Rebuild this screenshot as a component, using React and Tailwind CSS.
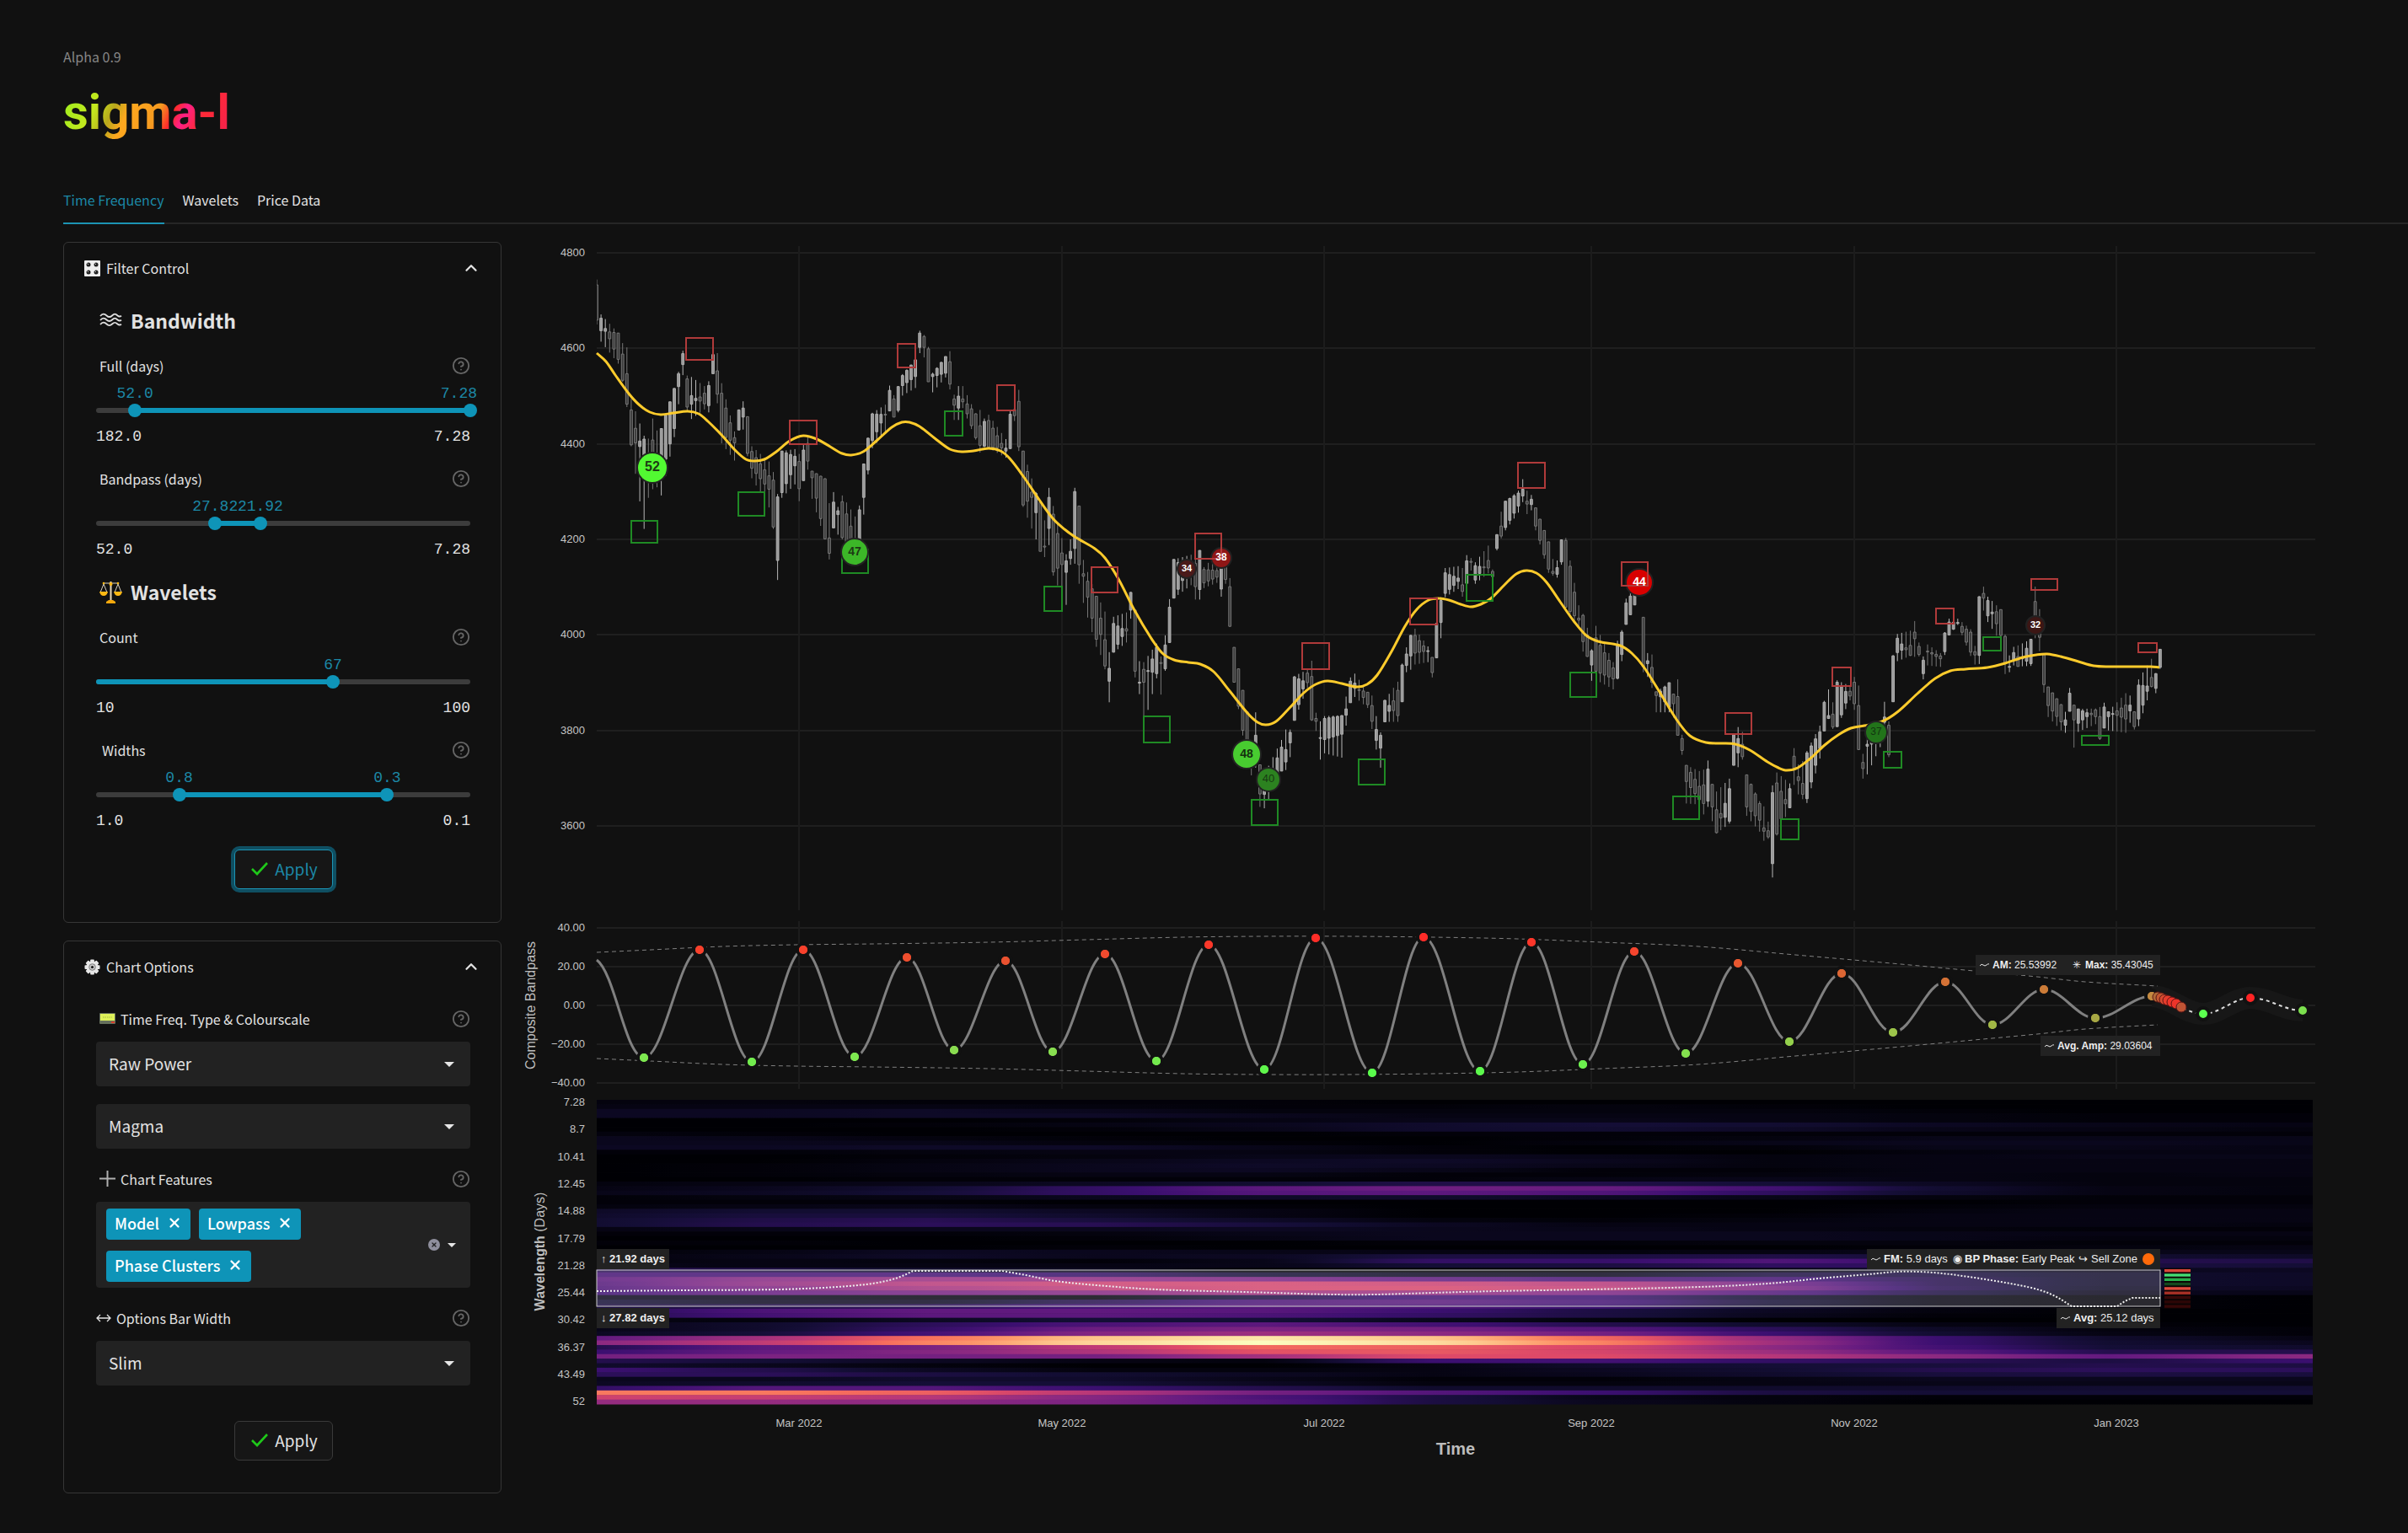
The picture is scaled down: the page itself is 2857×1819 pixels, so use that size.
import { useState } from 'react'
import { ChevronUp, CircleQuestionMark, X } from 'lucide-react'

/* ---------- price data: MMDD open high low close ---------- */
const PRICES = `
0113 4733 4744 4650 4659|0114 4637 4671 4614 4663|0118 4632 4632 4568 4577|0119 4588 4611 4530 4533|0120 4547 4602 4477 4483
0121 4471 4494 4395 4398|0124 4356 4417 4222 4410|0125 4367 4411 4287 4356|0126 4408 4453 4305 4350|0127 4380 4428 4309 4327
0128 4336 4432 4292 4432|0131 4432 4517 4414 4516|0201 4520 4551 4483 4547|0202 4566 4595 4544 4589|0203 4536 4543 4470 4477
0204 4483 4540 4452 4501|0207 4506 4521 4472 4484|0208 4480 4531 4466 4522|0209 4547 4590 4547 4587|0210 4553 4590 4485 4504
0211 4506 4527 4401 4419|0214 4413 4426 4365 4402|0215 4429 4472 4429 4471|0216 4456 4489 4430 4475|0217 4457 4457 4374 4380
0218 4384 4395 4328 4349|0222 4333 4363 4267 4305|0223 4324 4341 4222 4226|0224 4156 4295 4115 4289|0225 4298 4385 4287 4385
0228 4354 4389 4315 4374|0301 4363 4379 4280 4306|0302 4323 4401 4323 4387|0303 4401 4417 4346 4364|0304 4343 4343 4285 4329
0307 4327 4328 4200 4201|0308 4203 4276 4158 4171|0309 4224 4299 4224 4278|0310 4252 4268 4210 4260|0311 4279 4292 4200 4204
0314 4202 4248 4162 4173|0315 4189 4271 4188 4262|0316 4288 4358 4252 4358|0317 4345 4413 4336 4412|0318 4407 4465 4391 4463
0321 4462 4482 4424 4461|0322 4469 4522 4469 4512|0323 4494 4502 4456 4456|0324 4470 4521 4466 4520|0325 4522 4546 4501 4543
0328 4541 4576 4517 4576|0329 4602 4637 4590 4632|0330 4625 4628 4581 4602|0331 4599 4603 4530 4530|0401 4541 4549 4508 4546
0404 4548 4583 4539 4583|0405 4572 4594 4514 4525|0406 4494 4503 4450 4481|0407 4475 4521 4450 4500|0408 4494 4521 4475 4488
0411 4463 4464 4409 4413|0412 4438 4471 4382 4397|0413 4395 4453 4393 4447|0414 4449 4461 4391 4393|0418 4385 4410 4371 4391
0419 4390 4471 4390 4462|0420 4472 4489 4448 4459|0421 4489 4513 4385 4394|0422 4385 4385 4268 4272|0425 4256 4299 4200 4296
0426 4278 4279 4175 4175|0427 4186 4240 4163 4184|0428 4223 4308 4188 4288|0429 4253 4270 4124 4132|0502 4131 4169 4063 4155
0503 4160 4200 4147 4175|0504 4181 4308 4149 4300|0505 4270 4270 4107 4147|0506 4128 4157 4067 4123|0509 4081 4081 3975 3991
0510 4035 4068 3958 4001|0511 3990 4049 3928 3935|0512 3903 3964 3859 3930|0513 3964 4038 3963 4024|0516 4013 4047 3984 4008
0517 4052 4090 4034 4089|0518 4052 4052 3911 3924|0519 3899 3945 3876 3901|0520 3928 3943 3810 3901|0523 3919 3982 3909 3974
0524 3942 3955 3875 3941|0525 3929 3999 3925 3979|0526 3984 4075 3984 4058|0527 4077 4158 4077 4158|0531 4151 4168 4104 4132
0601 4150 4166 4074 4101|0602 4095 4177 4074 4177|0603 4137 4142 4098 4109|0606 4135 4169 4109 4121|0607 4096 4164 4080 4161
0608 4147 4160 4107 4116|0609 4101 4119 4017 4018|0610 3974 3974 3900 3901|0613 3839 3839 3734 3750|0614 3764 3778 3706 3735
0615 3764 3838 3722 3790|0616 3728 3728 3640 3667|0617 3666 3708 3637 3675|0621 3715 3780 3715 3765|0622 3734 3802 3717 3760
0623 3774 3802 3744 3796|0624 3821 3914 3821 3912|0627 3920 3927 3889 3900|0628 3913 3946 3820 3822|0629 3825 3837 3799 3819
0630 3785 3819 3739 3785|0701 3781 3830 3752 3825|0705 3792 3832 3743 3831|0706 3832 3871 3810 3845|0707 3858 3911 3858 3903
0708 3888 3919 3870 3899|0711 3880 3880 3847 3854|0712 3852 3873 3803 3819|0713 3779 3830 3760 3802|0714 3763 3796 3722 3790
0715 3818 3864 3818 3863|0718 3884 3902 3818 3831|0719 3860 3940 3860 3937|0720 3936 3974 3922 3960|0721 3956 4000 3927 3999
0722 3999 4013 3938 3962|0725 3966 3976 3943 3967|0726 3953 3953 3911 3921|0727 3952 4040 3952 4024|0728 4026 4079 3993 4072
0729 4087 4140 4079 4130|0801 4112 4144 4096 4119|0802 4105 4140 4080 4091|0803 4108 4167 4108 4155|0804 4154 4161 4135 4152
0805 4115 4152 4107 4145|0808 4156 4187 4129 4140|0809 4133 4137 4112 4122|0810 4181 4211 4177 4210|0811 4228 4258 4202 4207
0812 4225 4280 4219 4280|0815 4270 4302 4256 4297|0816 4291 4326 4278 4305|0817 4280 4302 4253 4274|0818 4273 4293 4261 4284
0819 4266 4267 4219 4228|0822 4195 4195 4130 4138|0823 4133 4159 4124 4129|0824 4127 4156 4120 4141|0825 4153 4200 4147 4199
0826 4198 4203 4057 4058|0829 4035 4062 4017 4031|0830 4041 4044 3965 3986|0831 4000 4015 3954 3955|0901 3937 3970 3904 3967
0902 3994 4019 3906 3924|0906 3931 3943 3886 3908|0907 3909 3988 3907 3980|0908 3959 4010 3945 4006|0909 4022 4076 4022 4067
0912 4083 4119 4083 4110|0913 4037 4037 3922 3933|0914 3940 3962 3912 3946|0915 3932 3959 3889 3901|0916 3881 3881 3838 3873
0919 3849 3900 3838 3900|0920 3876 3876 3827 3856|0921 3871 3907 3790 3790|0922 3783 3791 3749 3758|0923 3727 3727 3647 3693
0926 3683 3715 3645 3655|0927 3686 3718 3624 3647|0928 3652 3737 3640 3719|0929 3687 3687 3610 3640|0930 3634 3672 3584 3586
1003 3610 3699 3605 3678|1004 3727 3792 3727 3791|1005 3753 3807 3723 3783|1006 3771 3797 3739 3745|1007 3707 3707 3621 3640
1010 3647 3652 3588 3612|1011 3596 3641 3569 3589|1012 3590 3609 3573 3577|1013 3521 3685 3492 3670|1014 3690 3712 3580 3583
1017 3638 3689 3638 3678|1018 3746 3763 3686 3720|1019 3703 3729 3666 3695|1020 3689 3736 3656 3666|1021 3657 3757 3648 3753
1024 3762 3810 3741 3797|1025 3799 3862 3799 3859|1026 3825 3886 3824 3831|1027 3834 3859 3803 3807|1028 3808 3905 3808 3901
1031 3882 3893 3863 3872|1101 3901 3912 3843 3856|1102 3852 3894 3759 3760|1103 3733 3751 3699 3720|1104 3767 3796 3708 3771
1107 3780 3813 3765 3807|1108 3817 3860 3787 3828|1109 3811 3819 3744 3749|1110 3860 3958 3860 3956|1111 3963 4002 3945 3993
1114 3978 4009 3956 3957|1115 4006 4029 3954 3992|1116 3976 3984 3955 3959|1117 3919 3955 3907 3947|1118 3966 3980 3936 3965
1121 3956 3962 3933 3950|1122 3965 4006 3958 4004|1123 4000 4034 4000 4027|1125 4024 4034 4021 4026|1128 4006 4012 3956 3964
1129 3965 3977 3938 3958|1130 3957 4081 3939 4080|1201 4087 4101 4051 4077|1202 4040 4080 4027 4072|1205 4053 4053 3984 3999
1206 3997 4001 3918 3941|1207 3934 3957 3922 3934|1208 3947 3975 3936 3963|1209 3955 3978 3934 3934|1212 3940 3991 3935 3991
1213 4070 4101 3993 4019|1214 4015 4054 3966 3995|1215 3959 3959 3879 3896|1216 3891 3891 3828 3852|1219 3854 3855 3800 3818
1220 3811 3839 3795 3822|1221 3840 3889 3840 3878|1222 3853 3853 3764 3822|1223 3815 3845 3797 3845|1227 3843 3846 3813 3829
1228 3829 3849 3780 3783|1229 3805 3858 3805 3849|1230 3829 3840 3800 3839|1303 3853 3878 3795 3824|1304 3841 3873 3816 3853
1305 3839 3840 3802 3808|1306 3824 3907 3809 3895|1309 3911 3950 3890 3892|1310 3888 3920 3878 3919|1311 3932 3970 3929 3970`

const DAY = 5.11
const LEFT = 708
const priceY = (p) => 300 + (4800 - p) * 0.5667

// month 13 rolls over into the next January
const dayIndex = (mmdd) =>
  Math.round((Date.UTC(2022, Number(mmdd.slice(0, 2)) - 1, Number(mmdd.slice(2))) - Date.UTC(2022, 0, 13)) / 86400000)

function buildCandles() {
  const rows = PRICES.trim().split(/[|\n]/).map((r) => {
    const [d, ...v] = r.trim().split(' ')
    return { i: dayIndex(d), v: v.map(Number) }
  })
  const out = []
  rows.forEach((row, n) => {
    out.push(row)
    const next = rows[n + 1]
    if (!next) return
    // closed days are filled linearly
    for (let i = row.i + 1; i < next.i; i++) {
      const t = (i - row.i) / (next.i - row.i)
      out.push({ i, v: row.v.map((a, k) => a + (next.v[k] - a) * t) })
    }
  })
  const paths = { up: '', down: '', upWick: '', downWick: '' }
  out.forEach(({ i, v: [o, h, l, c] }) => {
    const x = LEFT + i * DAY
    const dir = c >= o ? 'up' : 'down'
    const top = priceY(Math.max(o, c))
    const bottom = Math.max(priceY(Math.min(o, c)), top + 1)
    paths[`${dir}Wick`] += `M${x.toFixed(1)} ${priceY(h).toFixed(1)}V${priceY(l).toFixed(1)}`
    paths[dir] += `M${(x - 1.4).toFixed(1)} ${top.toFixed(1)}h2.8V${bottom.toFixed(1)}h-2.8z`
  })
  return paths
}
const CANDLES = buildCandles()

// smooth line through a flat list x0,y0,x1,y1...
function smooth(flat) {
  const p = []
  for (let i = 0; i < flat.length; i += 2) p.push([flat[i], flat[i + 1]])
  let d = `M${p[0][0]} ${p[0][1]}`
  for (let i = 0; i < p.length - 1; i++) {
    const a = p[i - 1] || p[i]
    const b = p[i]
    const c = p[i + 1]
    const e = p[i + 2] || c
    const k = (c[0] - b[0]) / 3
    const m1 = a === b ? (c[1] - b[1]) / (c[0] - b[0]) : (c[1] - a[1]) / (c[0] - a[0])
    const m2 = e === c ? (c[1] - b[1]) / (c[0] - b[0]) : (e[1] - b[1]) / (e[0] - b[0])
    d += `C${b[0] + k} ${b[1] + m1 * k} ${c[0] - k} ${c[1] - m2 * k} ${c[0]} ${c[1]}`
  }
  return d
}

const LOWPASS = smooth([
  708, 419, 719, 429, 730, 445, 746, 467, 758, 480, 771, 489, 784, 492, 799, 490, 816, 488, 829, 491, 840, 500, 856, 516,
  872, 534, 885, 545, 895, 547, 907, 545, 921, 536, 937, 523, 953, 517, 969, 521, 985, 530, 999, 538, 1010, 540, 1024, 536,
  1040, 523, 1058, 507, 1070, 501, 1079, 501, 1091, 506, 1109, 520, 1127, 533, 1141, 536, 1155, 535, 1173, 532, 1187, 535,
  1198, 544, 1214, 565, 1233, 593, 1249, 615, 1263, 628, 1277, 638, 1299, 651, 1311, 662, 1327, 687, 1346, 724, 1365, 756,
  1379, 775, 1393, 783, 1410, 786, 1424, 788, 1440, 797, 1459, 820, 1480, 846, 1492, 857, 1502, 860, 1514, 856, 1530, 840,
  1547, 822, 1561, 812, 1575, 808, 1592, 811, 1610, 815, 1622, 812, 1634, 801, 1651, 773, 1667, 743, 1681, 723, 1695, 712,
  1707, 710, 1719, 712, 1733, 717, 1745, 720, 1757, 717, 1769, 710, 1785, 694, 1799, 681, 1811, 677, 1823, 680, 1835, 691,
  1851, 714, 1868, 738, 1882, 754, 1896, 761, 1922, 766, 1936, 775, 1950, 791, 1969, 821, 1990, 855, 2005, 873, 2024, 881,
  2042, 882, 2059, 883, 2076, 890, 2097, 904, 2110, 911, 2120, 914, 2133, 911, 2149, 899, 2165, 884, 2181, 872, 2196, 864,
  2212, 861, 2233, 856, 2251, 845, 2275, 823, 2296, 805, 2314, 796, 2332, 794, 2358, 792, 2379, 787, 2400, 780, 2416, 777,
  2429, 776, 2445, 779, 2466, 785, 2484, 790, 2502, 791, 2526, 791, 2552, 791, 2562, 792,
])

const PEAK_BOXES = [
  [814, 401, 32, 26], [937, 499, 32, 28], [1065, 408, 21, 28], [1183, 457, 21, 30], [1295, 673, 31, 30], [1418, 633, 31, 30],
  [1545, 763, 32, 31], [1673, 710, 32, 31], [1801, 549, 32, 30], [1924, 667, 31, 28], [2047, 846, 31, 25], [2174, 792, 22, 22],
  [2297, 722, 21, 18], [2410, 687, 31, 13], [2537, 763, 22, 11],
]
const TROUGH_BOXES = [
  [749, 618, 31, 26], [876, 584, 31, 28], [999, 652, 31, 28], [1121, 488, 21, 29], [1239, 696, 21, 29], [1357, 850, 31, 31],
  [1485, 949, 31, 30], [1612, 901, 31, 30], [1740, 682, 31, 31], [1863, 798, 31, 29], [1985, 945, 31, 27], [2113, 972, 21, 24],
  [2235, 892, 21, 19], [2353, 756, 21, 16], [2470, 873, 32, 11],
]

const PEAK_CLUSTERS = [
  { x: 1408, y: 675, r: 10, fill: '#4a1a1a', text: 34, size: 11, ink: '#fff', bold: true },
  { x: 1449, y: 662, r: 11, fill: '#8f1616', text: 38, size: 12, ink: '#fff', bold: true },
  { x: 1945, y: 691, r: 15, fill: '#d90000', text: 44, size: 14, ink: '#fff', bold: true },
  { x: 2415, y: 742, r: 10, fill: '#3c1614', text: 32, size: 11, ink: '#fff', bold: true },
]
const TROUGH_CLUSTERS = [
  { x: 774, y: 555, r: 17, fill: '#52f932', text: 52, size: 16, ink: '#1c3a14', bold: true },
  { x: 1014, y: 655, r: 15, fill: '#3cb728', text: 47, size: 14, ink: '#1c3a14', bold: true },
  { x: 1479, y: 895, r: 16, fill: '#48cc30', text: 48, size: 14, ink: '#14300e', bold: true },
  { x: 1505, y: 925, r: 13, fill: '#2c8220', text: 40, size: 13, ink: '#173a12', bold: false },
  { x: 2226, y: 869, r: 12, fill: '#22741a', text: 37, size: 12, ink: '#123610', bold: false },
]

/* ---------- composite bandpass ---------- */
const EXTREMES = [
  [764, 1255, '#7ee850'], [830, 1127, '#f8412c'], [892, 1260, '#72ec4e'], [953, 1127, '#f8412c'], [1014, 1254, '#7ee850'],
  [1076, 1136, '#ee4e2e'], [1132, 1246, '#8adc50'], [1193, 1140, '#ea5230'], [1249, 1248, '#88de50'], [1311, 1132, '#f04a2e'],
  [1372, 1259, '#74ea4e'], [1434, 1121, '#fb382a'], [1500, 1269, '#60f64c'], [1561, 1113, '#ff2e28'], [1628, 1273, '#5afb4c'],
  [1689, 1112, '#ff2c28'], [1756, 1271, '#5cf84c'], [1817, 1118, '#fc362a'], [1878, 1263, '#6cf04e'], [1939, 1129, '#f4452e'],
  [2000, 1250, '#84e04e'], [2062, 1143, '#e85830'], [2123, 1236, '#94d04c'], [2185, 1155, '#dc6634'], [2246, 1225, '#9cc44a'],
  [2308, 1165, '#d47236'], [2364, 1216, '#a2b846'], [2425, 1174, '#cc7c38'], [2486, 1208, '#a8a844'], [2553, 1182, '#c48a40'],
]
const FORECAST = [[2614, 1203, '#5cff50'], [2670, 1184, '#ff2424'], [2732, 1199, '#7ce04e']]
const NOW = [
  [2560, 1183, '#b06a38'], [2564, 1184, '#c45832'], [2568, 1186, '#d84a30'], [2572, 1187, '#e63c2c'], [2577, 1189, '#ee342a'],
  [2582, 1191, '#ee342a'], [2588, 1195, '#c05434'],
]
const wave = (pts) =>
  pts.slice(1).reduce((d, [x, y], i) => {
    const [px, py] = pts[i]
    const k = (x - px) * 0.3642
    return `${d}C${px + k} ${py} ${x - k} ${y} ${x} ${y}`
  }, `M${pts[0][0]} ${pts[0][1]}`)
const BANDPASS = `M708 1139C730 1155 742 1255 764 1255${wave(EXTREMES).replace('M764 1255', '')}`
const FORECAST_LINE = wave([[2553, 1182], ...FORECAST])

const ENVELOPE = [
  708, 1130, 772, 1127, 858, 1123, 944, 1121, 1036, 1120, 1174, 1118, 1289, 1115, 1404, 1112, 1500, 1111, 1600, 1111, 1700, 1112,
  1800, 1114, 1900, 1118, 2015, 1123, 2130, 1133, 2244, 1143, 2342, 1152, 2417, 1159, 2474, 1165, 2560, 1170,
]
const ENVELOPE_TOP = smooth(ENVELOPE)
const ENVELOPE_BOTTOM = smooth(ENVELOPE.map((v, i) => (i % 2 ? 2386 - v : v)))

/* ---------- wavelet power, one row per wavelet, 0-100 ---------- */
const STOPS_X = [708, 900, 1100, 1300, 1500, 1700, 1900, 2100, 2300, 2500, 2744]
const POWER = `
2 2 1 1 1 0 0 0 0 0 0|3 3 3 2 1 1 2 1 0 0 0|6 6 7 5 2 2 2 2 1 0 0|6 6 7 7 5 3 3 3 2 1 1
0 0 0 1 3 4 4 3 2 1 1|0 0 1 3 5 8 10 9 6 4 3|0 0 0 1 4 8 9 7 4 3 2|2 1 0 0 0 1 1 1 1 1 1
5 4 2 1 0 0 1 2 4 4 4|5 5 4 2 1 0 2 4 5 5 4|6 6 7 7 4 1 0 1 4 4 3|1 1 2 3 3 1 0 0 2 3 3
0 0 1 2 4 5 4 2 3 4 4|0 0 2 4 6 7 5 2 3 3 3|0 1 3 5 7 6 4 2 3 3 3|0 1 3 5 6 4 1 1 3 3 3
0 1 2 3 3 1 1 2 3 2 3|0 0 1 1 1 1 3 4 3 2 2|2 3 4 6 9 13 13 10 6 2 2|3 5 9 18 28 33 31 22 9 3 2
4 6 10 18 26 28 25 17 8 3 2|1 2 3 5 7 8 6 4 2 1 1|1 1 1 0 0 0 0 0 0 1 1|2 3 4 2 1 0 0 0 1 2 2
7 9 9 6 3 0 0 0 2 3 3|8 11 11 8 3 0 0 1 3 3 3|9 13 15 11 7 2 1 2 3 3 3|9 14 16 15 11 6 3 3 3 3 2
3 4 5 5 6 5 4 3 2 1 1|1 1 1 2 4 5 5 5 4 3 3|0 0 0 1 3 5 5 5 4 2 2|1 1 0 0 0 1 1 2 2 1 1
0 0 0 1 0 0 0 0 1 2 3|1 3 6 5 4 3 2 3 4 4 4|2 4 7 5 6 12 12 13 10 9 7|2 3 2 1 4 18 19 25 19 14 13
4 3 3 3 4 10 12 17 17 12 10|15 13 8 5 0 0 0 3 8 5 6|22 22 22 18 10 6 5 12 12 8 7|27 38 42 40 35 28 22 22 14 8 7
25 40 50 55 57 55 50 33 14 8 7|24 36 45 52 57 58 52 36 15 7 6|20 30 34 38 45 42 36 25 12 5 4|5 5 3 2 12 22 20 8 3 1 0
10 6 6 14 24 27 22 10 3 1 0|12 14 16 22 26 24 20 9 3 1 0|14 24 29 29 27 20 12 6 2 0 0|14 22 28 28 24 18 12 5 1 0 0
3 2 6 10 10 5 2 0 0 0 0|4 8 16 24 28 22 14 8 3 1 0|4 8 18 32 36 34 26 16 7 2 1|6 10 22 38 44 40 34 20 9 3 1
30 45 70 88 95 88 68 42 20 8 3|40 52 74 92 100 93 74 45 20 9 5|14 28 35 52 68 66 58 40 22 10 8|20 30 38 48 62 64 58 44 28 14 14
34 36 34 34 45 60 60 50 40 30 40|14 10 6 3 2 20 22 18 15 12 20|8 5 2 0 0 3 8 10 11 14 12|20 14 6 2 2 3 6 9 14 16 16
16 16 12 9 6 3 5 8 11 12 11|5 5 8 8 4 1 1 3 5 5 5|6 8 10 10 6 2 2 3 4 4 4|18 26 26 20 14 8 8 8 8 9 9
72 72 66 50 34 26 20 12 10 10 10|56 54 50 38 24 12 4 2 1 1 1|42 42 40 36 26 12 5 2 0 0 0`
  .trim().split(/[|\n]/).map((r) => r.trim().split(' ').map(Number))

const MAGMA = [
  [0, 0, 4], [20, 14, 54], [59, 15, 112], [100, 26, 128], [140, 41, 129], [183, 55, 121], [222, 73, 104], [247, 112, 92],
  [254, 159, 109], [254, 207, 146], [252, 253, 191],
]
function magma(v) {
  const t = Math.max(0, Math.min(99.99, v)) / 10
  const i = Math.floor(t)
  const c = MAGMA[i].map((a, k) => Math.round(a + (MAGMA[i + 1][k] - a) * (t - i)))
  return `rgb(${c.join(',')})`
}
function rowStops(row) {
  const stops = []
  for (let s = 0; s < STOPS_X.length - 1; s++) {
    for (let q = 0; q < 4; q++) {
      const t = q / 4
      const e = t * t * (3 - 2 * t) * 0.5 + t * 0.5
      const x = STOPS_X[s] + (STOPS_X[s + 1] - STOPS_X[s]) * t
      stops.push([(x - 708) / 2036, magma(row[s] + (row[s + 1] - row[s]) * e)])
    }
  }
  stops.push([1, magma(row[row.length - 1])])
  return stops
}
const ROW_H = 361 / POWER.length

const FREQ_LINE = `${smooth([
  708, 1532, 810, 1531, 923, 1530, 993, 1527, 1035, 1523, 1059, 1518, 1073, 1513, 1083, 1508,
])}L1189 1508${smooth([
  1189, 1508, 1217, 1513, 1252, 1520, 1301, 1525, 1372, 1530, 1477, 1533, 1582, 1536, 1631, 1536, 1700, 1534, 1774, 1532,
  1884, 1530, 2017, 1527, 2098, 1523, 2158, 1517, 2217, 1512, 2250, 1509, 2276, 1509, 2305, 1511, 2349, 1517, 2401, 1526,
  2427, 1533, 2442, 1540, 2458, 1550,
]).replace('M1189 1508', '')}L2512 1550L2521 1544L2530 1540L2563 1540`

const PHASE_BARS = ['#d8463a', '#44dc74', '#28b04c', '#15481e', '#e04a3c', '#a83026', '#360808', '#2c0606', '#360808']

const MONTHS = [[948, 'Mar 2022'], [1260, 'May 2022'], [1571, 'Jul 2022'], [1888, 'Sep 2022'], [2200, 'Nov 2022'], [2511, 'Jan 2023']]
const WAVELENGTHS = ['7.28', '8.7', '10.41', '12.45', '14.88', '17.79', '21.28', '25.44', '30.42', '36.37', '43.49', '52']

function Tag({ x, y, w, children, size = 13, wavy = false }) {
  return (
    <g>
      <rect x={x} y={y} width={w} height="24" fill="#222" />
      {wavy && (
        <path
          d={`M${x + 5} ${y + 13}q2 -3 4 -1t4 0t3 -1`}
          fill="none"
          stroke="#e6e6e6"
          strokeWidth="1"
        />
      )}
      <text x={wavy ? x + 20 : x + 5} y={y + 16} fontSize={size} fill="#eee">{children}</text>
    </g>
  )
}

function Clusters({ items }) {
  return items.map((c) => <circle key={c.text} cx={c.x} cy={c.y} r={c.r + 1} fill={c.fill} stroke="#222" strokeWidth="2" />)
}

function Chart() {
  return (
    <svg
      viewBox="611 287 2246 1486"
      className="block h-auto w-full font-['Liberation_Sans',Arial,sans-serif]"
      role="img"
      aria-label="Price, composite bandpass and time frequency chart"
    >
      <defs>
        {POWER.map((row, i) => (
          <linearGradient id={`row${i}`} key={i}>
            {rowStops(row).map(([o, c]) => <stop key={o} offset={o} stopColor={c} />)}
          </linearGradient>
        ))}
        <clipPath id="plot"><rect x="708" y="287" width="2040" height="800" /></clipPath>
      </defs>

      {/* grid */}
      <g stroke="#1f1f1f" strokeWidth="2">
        {[4800, 4600, 4400, 4200, 4000, 3800, 3600].map((p) => <path key={p} d={`M708 ${Math.round(priceY(p))}H2747`} />)}
        {[1101, 1147, 1193, 1239, 1285].map((y) => <path key={y} d={`M708 ${y}H2747`} />)}
        {MONTHS.map(([x]) => <path key={x} d={`M${x} 292V1080M${x} 1093V1292`} stroke="#1c1c1c" />)}
      </g>
      <g fontSize="13" fill="#c4c4c4" textAnchor="end">
        {[4800, 4600, 4400, 4200, 4000, 3800, 3600].map((p) => <text key={p} x="694" y={Math.round(priceY(p)) + 4}>{p}</text>)}
        {['40.00', '20.00', '0.00', '−20.00', '−40.00'].map((t, i) => <text key={t} x="694" y={1105 + i * 46}>{t}</text>)}
        {WAVELENGTHS.map((t, i) => <text key={t} x="694" y={Math.round(1312 + i * 32.3)}>{t}</text>)}
      </g>
      <g fontSize="13" fill="#c4c4c4" textAnchor="middle">
        {MONTHS.map(([x, t]) => <text key={t} x={x} y="1693">{t}</text>)}
      </g>
      <text x="1727" y="1726" fontSize="20" fontWeight="bold" fill="#bdbdbd" textAnchor="middle">Time</text>
      <text transform="translate(635 1193) rotate(-90)" fontSize="16" fill="#bdbdbd" textAnchor="middle">Composite Bandpass</text>
      <text transform="translate(646 1485) rotate(-90)" fontSize="16" fill="#bdbdbd" textAnchor="middle">
        <tspan fontWeight="bold">Wavelength</tspan> (Days)
      </text>

      {/* price */}
      <g clipPath="url(#plot)">
        <path d={CANDLES.downWick} stroke="#777" strokeWidth="1" />
        <path d={CANDLES.down} stroke="#777" strokeWidth="1" fill="#3a3a3a" />
        <path d={CANDLES.upWick} stroke="#b8b8b8" strokeWidth="1" />
        <path d={CANDLES.up} stroke="#b0b0b0" strokeWidth="1" fill="#9a9a9a" />
      </g>
      <path d={LOWPASS} fill="none" stroke="#fdcb2c" strokeWidth="3" />
      <Clusters items={PEAK_CLUSTERS} />
      <g fill="none" strokeWidth="2">
        {PEAK_BOXES.map(([x, y, w, h]) => <rect key={x} x={x} y={y} width={w} height={h} stroke="#b03a3a" />)}
        {TROUGH_BOXES.map(([x, y, w, h]) => <rect key={x} x={x} y={y} width={w} height={h} stroke="#1f8a24" />)}
      </g>
      <Clusters items={TROUGH_CLUSTERS} />
      <g textAnchor="middle">
        {[...PEAK_CLUSTERS, ...TROUGH_CLUSTERS].map((c) => (
          <text key={c.text} x={c.x} y={c.y + Math.round(c.size * 0.25)} fontSize={c.size} fill={c.ink} fontWeight={c.bold ? 'bold' : 'normal'}>
            {c.text}
          </text>
        ))}
      </g>

      {/* bandpass */}
      <path d={FORECAST_LINE} fill="none" stroke="#171717" strokeWidth="26" />
      <g fill="none" stroke="#808080" strokeWidth="1" strokeDasharray="5 4">
        <path d={ENVELOPE_TOP} />
        <path d={ENVELOPE_BOTTOM} />
      </g>
      <path d={FORECAST_LINE} fill="none" stroke="#ddd" strokeWidth="2" strokeDasharray="4 4" />
      <path d={BANDPASS} fill="none" stroke="#808080" strokeWidth="3" />
      {EXTREMES.map(([x, y, c]) => <circle key={x} cx={x} cy={y} r="7" fill={c} stroke="#111" strokeWidth="4" />)}
      {EXTREMES.map(([x, y, c]) => <circle key={x} cx={x} cy={y} r="5" fill={c} />)}
      {NOW.map(([x, y, c]) => <circle key={x} cx={x} cy={y} r="6" fill={c} stroke="#5a1414" strokeWidth="1" />)}
      {FORECAST.map(([x, y, c]) => <circle key={x} cx={x} cy={y} r="7" fill={c} stroke="#111" strokeWidth="4" />)}
      <Tag x={2344} y={1133} w={219} size={12} wavy>
        <tspan fontWeight="bold">AM:</tspan> 25.53992
        <tspan x="2459">✳</tspan>
        <tspan x="2474" fontWeight="bold">Max:</tspan> 35.43045
      </Tag>
      <Tag x={2421} y={1229} w={142} size={12} wavy><tspan fontWeight="bold">Avg. Amp:</tspan> 29.03604</Tag>

      {/* time frequency */}
      {POWER.map((_, i) => (
        <rect key={i} x="708" y={1305 + i * ROW_H} width="2036" height={ROW_H + 0.5} fill={`url(#row${i})`} />
      ))}
      <rect x="708" y="1507" width="1855" height="43" fill="#fff" fillOpacity="0.16" stroke="#ccc" strokeWidth="1" />
      <path d={FREQ_LINE} fill="none" stroke="#eee" strokeWidth="2" strokeDasharray="2 2" />
      <rect x="2568" y="1505" width="31" height="48" fill="#0c0404" />
      {PHASE_BARS.map((c, i) => <rect key={i} x="2568" y={1506 + i * 5.3} width="31" height="3.4" fill={c} />)}
      <Tag x={708} y={1482} w={86}><tspan fontWeight="bold">↑ 21.92 days</tspan></Tag>
      <Tag x={708} y={1552} w={86}><tspan fontWeight="bold">↓ 27.82 days</tspan></Tag>
      <Tag x={2215} y={1482} w={348} wavy>
        <tspan fontWeight="bold">FM:</tspan> 5.9 days
        <tspan x="2317">◉</tspan>
        <tspan x="2331" fontWeight="bold">BP Phase:</tspan> Early Peak
        <tspan x="2466">↪</tspan>
        <tspan x="2481">Sell Zone</tspan>
      </Tag>
      <circle cx="2549" cy="1494" r="7" fill="#ff6a0a" />
      <Tag x={2440} y={1552} w={123} wavy><tspan fontWeight="bold">Avg:</tspan> 25.12 days</Tag>
    </svg>
  )
}

/* ---------- icons ---------- */
function KnobsIcon() {
  return (
    <svg viewBox="0 0 19 19" className="h-[19px] w-[19px]" aria-hidden="true">
      <rect width="19" height="19" rx="1" fill="#eee" />
      {[[5, 5], [14, 5], [5, 14], [14, 14]].map(([x, y]) => (
        <g key={`${x}${y}`}>
          <circle cx={x} cy={y} r="2.5" fill="#222" />
          <path d={`M${x} ${y}l-1.5-1.5`} stroke="#ccc" strokeWidth="1" />
        </g>
      ))}
    </svg>
  )
}

function GearIcon() {
  return (
    <svg viewBox="0 0 20 20" className="h-[19px] w-[19px]" aria-hidden="true">
      {[0, 45, 90, 135].map((a) => <rect key={a} x="7.5" y="0.5" width="5" height="19" rx="1" fill="#e6e6e6" transform={`rotate(${a} 10 10)`} />)}
      <circle cx="10" cy="10" r="7.5" fill="#e6e6e6" />
      <circle cx="10" cy="10" r="4" fill="#c8c8c8" stroke="#777" strokeWidth="1" />
      <circle cx="10" cy="10" r="1.6" fill="#111" />
    </svg>
  )
}

function WavesIcon() {
  return (
    <svg viewBox="0 0 27 18" className="h-[18px] w-[27px]" fill="none" stroke="#ddd" strokeWidth="1.8" aria-hidden="true">
      {[4, 9, 14].map((y) => (
        <path key={y} d={`M1 ${y}c2.500-3 5-3 7.500-.5c2 2 4.500 2 6.500 0c2.500-2.500 4-2.500 6.500 0c1.500 1.300 3 1.300 4.500.3`} />
      ))}
    </svg>
  )
}

function ScalesIcon() {
  return (
    <svg viewBox="0 0 27 27" className="h-[27px] w-[27px]" aria-hidden="true">
      <path d="M4 3h19M5 4L1 14M5 4l4 10M22 4l-4 10M22 4l4 10" stroke="#d8d0c0" strokeWidth="1" fill="none" />
      <path d="M13.500 1v23" stroke="#ead9b8" strokeWidth="2" />
      <path d="M0 13h10q-1 5-5 5t-5-5zM17 13h10q-1 5-5 5t-5-5z" fill="#fdb813" />
      <path d="M11 23h5l3 2v2H8v-2z" fill="#f5a80c" />
      <circle cx="13.500" cy="4" r="2" fill="#fdb813" />
      <circle cx="5" cy="3" r="1.300" fill="#fdb813" />
      <circle cx="22" cy="3" r="1.300" fill="#fdb813" />
    </svg>
  )
}

function PagerIcon() {
  return (
    <svg viewBox="0 0 19 13" className="-mr-0.5 h-[13px] w-[19px]" aria-hidden="true">
      <rect width="19" height="13" rx="1" fill="#66705c" />
      <rect x="1" y="1" width="17" height="8" fill="#dff25a" />
      <path d="M4 5h11" stroke="#a8c03c" strokeDasharray="1.500 1" />
      <rect x="14" y="10" width="4" height="2" fill="#d8402c" />
    </svg>
  )
}

function CheckIcon() {
  return (
    <svg viewBox="0 0 20 16" className="h-4 w-5" fill="none" stroke="#1fc81a" strokeWidth="2.600" aria-hidden="true">
      <path d="M1 8l6 6L19 1" />
    </svg>
  )
}

/* ---------- controls ---------- */
function Help({ topic }) {
  return (
    <button type="button" aria-label={`Help: ${topic}`} className="text-[#666]">
      <CircleQuestionMark size={22} strokeWidth={2} />
    </button>
  )
}

function LabelRow({ htmlFor, icon, text, inset = 'pl-1' }) {
  return (
    <div className={`flex h-[42px] items-center justify-between pb-[3px] ${inset}`}>
      <label htmlFor={htmlFor} className="flex items-center gap-2 text-base">
        {icon}
        {text}
      </label>
      <Help topic={text} />
    </div>
  )
}

const RANGE =
  'pointer-events-none absolute -left-2 top-0 h-[18px] w-[calc(100%+16px)] appearance-none bg-transparent outline-none ' +
  '[&::-webkit-slider-thumb]:pointer-events-auto [&::-webkit-slider-thumb]:h-4 [&::-webkit-slider-thumb]:w-4 ' +
  '[&::-webkit-slider-thumb]:appearance-none [&::-webkit-slider-thumb]:rounded-full [&::-webkit-slider-thumb]:bg-[#0e94b8]'

function Slider({ id, label, min, max, thumbs, format, inset }) {
  const [values, setValues] = useState(thumbs)
  const from = values.length > 1 ? values[0] : 0
  const to = values[values.length - 1]
  return (
    <div className="h-[134px]">
      <LabelRow htmlFor={`${id}-0`} text={label} inset={inset} />
      <div className="relative h-[22px] font-['Liberation_Mono',monospace] text-lg/[22px] text-[#1c88a6]">
        {values.map((v, i) => (
          <span
            key={i}
            className={v > 970 ? 'absolute -right-2' : 'absolute -translate-x-1/2'}
            style={v > 970 ? undefined : { left: `${v / 10}%` }}
          >
            {format[i]}
          </span>
        ))}
      </div>
      <div className="relative h-[18px]">
        <div className="absolute inset-x-0 top-[6px] h-[6px] rounded-full bg-[#3c3c3c]" />
        <div
          className="absolute top-[6px] h-[6px] rounded-full bg-[#0e94b8]"
          style={{ left: `${from / 10}%`, width: `${(to - from) / 10}%` }}
        />
        {values.map((v, i) => (
          <input
            key={i}
            id={`${id}-${i}`}
            aria-label={`${label} ${i + 1}`}
            type="range"
            min="0"
            max="1000"
            value={v}
            onChange={(e) => setValues(values.map((o, k) => (k === i ? Number(e.target.value) : o)))}
            className={RANGE}
          />
        ))}
      </div>
      <div className="mt-[10px] flex h-6 items-center justify-between font-['Liberation_Mono',monospace] text-lg/6">
        <span>{min}</span>
        <span>{max}</span>
      </div>
    </div>
  )
}

function Select({ id, options, label }) {
  return (
    <div className="relative">
      <select id={id} aria-label={label} className="h-[53px] w-full appearance-none rounded bg-[#222] px-[15px] pb-[2px] text-[19px]/[28px]">
        {options.map((o) => <option key={o}>{o}</option>)}
      </select>
      <svg viewBox="0 0 12 6" className="pointer-events-none absolute right-[19px] top-6 h-[6px] w-3" fill="#e6e6e6" aria-hidden="true">
        <path d="M0 0h12L6 6z" />
      </svg>
    </div>
  )
}

function Card({ icon, title, children }) {
  return (
    <section className="rounded-md border border-[#363636]">
      <button type="button" aria-expanded="true" className="flex h-[62px] w-full items-center gap-[7px] px-6 pb-[2px] text-base">
        {icon}
        <span>{title}</span>
        <ChevronUp size={22} strokeWidth={2.5} className="ml-auto" />
      </button>
      <div className="pb-[38px] pl-[38px] pr-9 pt-[10px]">{children}</div>
    </section>
  )
}

function Heading({ icon, children }) {
  return (
    <h2 className="mb-3 flex h-[42px] items-center gap-[10px] pb-[2px] pl-1 text-[23px]/[30px] font-bold">
      {icon}
      {children}
    </h2>
  )
}

function ApplyButton({ focused }) {
  return (
    <button
      type="button"
      className={`mx-auto flex h-[47px] w-[117px] items-center justify-center gap-2 rounded-md border bg-[#161616] pb-[2px] pl-[3px] text-[19px]/[28px] ${
        focused ? 'border-[#1c94b4] text-[#1c88a6] ring-4 ring-[#0f4f62]' : 'border-[#3a3a3a]'
      }`}
    >
      <CheckIcon />
      Apply
    </button>
  )
}

function FeaturePicker() {
  const [features, setFeatures] = useState(['Model', 'Lowpass', 'Phase Clusters'])
  return (
    <div className="flex min-h-[102px] items-center justify-between rounded bg-[#222] pl-3 pr-[17px]">
      <div className="flex flex-1 flex-wrap gap-x-[10px] gap-y-[13px]">
        {features.map((f) => (
          <span key={f} className="flex h-[37px] items-center gap-[9px] rounded bg-[#0e94b8] px-[10px] pb-[2px] text-lg/[26px] font-medium text-white">
            {f}
            <button type="button" aria-label={`Remove ${f}`} onClick={() => setFeatures(features.filter((o) => o !== f))}>
              <X size={18} strokeWidth={3} />
            </button>
          </span>
        ))}
      </div>
      <div className="flex items-center gap-[9px]">
        <button type="button" aria-label="Clear all" onClick={() => setFeatures([])} className="flex h-[14px] w-[14px] items-center justify-center rounded-full bg-[#8f8f9d] text-[#222]">
          <X size={8} strokeWidth={4} />
        </button>
        <svg viewBox="0 0 10 5" className="h-[5px] w-[10px]" fill="#e6e6e6" aria-hidden="true">
          <path d="M0 0h10L5 5z" />
        </svg>
      </div>
    </div>
  )
}

const TABS = ['Time Frequency', 'Wavelets', 'Price Data']

export default function App() {
  const [tab, setTab] = useState(TABS[0])
  return (
    <div className="min-h-screen bg-[#111] pl-[75px] font-['Noto_Sans_CJK_SC',sans-serif] text-[#e2e2e2]">
      <header className="pt-[55px]">
        <p className="text-base/6 text-[#868686]">Alpha 0.9</p>
        <h1 className="mt-5 w-fit bg-[linear-gradient(115deg,#96f01e_0%,#c4e81e_22%,#b8a81c_32%,#ffa81e_40%,#f59a20_56%,#ff2a2a_64%,#ff1f86_70%,#ff2a36_80%,#f02050_100%)] bg-clip-text font-['Roboto',sans-serif] text-[58px]/[68px] font-bold text-transparent">
          sigma-l
        </h1>
      </header>

      <nav role="tablist" className="mt-[45px] flex gap-[22px] border-b-2 border-[#262626]">
        {TABS.map((t) => (
          <button
            key={t}
            type="button"
            role="tab"
            aria-selected={t === tab}
            onClick={() => setTab(t)}
            className={`-mb-0.5 flex h-[54px] items-center border-b-2 pb-[3px] text-base ${
              t === tab ? 'border-[#1c94b4] text-[#1c88a6]' : 'border-transparent'
            }`}
          >
            {t}
          </button>
        ))}
      </nav>

      <div className="mt-[21px] flex items-start gap-4">
        <aside className="flex w-[520px] shrink-0 flex-col gap-[21px]">
          <Card icon={<KnobsIcon />} title="Filter Control">
            <Heading icon={<WavesIcon />}>Bandwidth</Heading>
            <Slider id="full" label="Full (days)" min="182.0" max="7.28" thumbs={[104, 1000]} format={['52.0', '7.28']} />
            <Slider id="bandpass" label="Bandpass (days)" min="52.0" max="7.28" thumbs={[318, 439]} format={['27.82', '21.92']} />
            <Heading icon={<ScalesIcon />}>Wavelets</Heading>
            <Slider id="count" label="Count" min="10" max="100" thumbs={[633]} format={['67']} />
            <Slider id="widths" label="Widths" min="1.0" max="0.1" thumbs={[222, 778]} format={['0.8', '0.3']} inset="pl-[7px]" />
            <div className="pb-px pt-1">
              <ApplyButton focused />
            </div>
          </Card>

          <Card icon={<GearIcon />} title="Chart Options">
            <div className="flex flex-col gap-[5px]">
              <LabelRow htmlFor="tf-type" icon={<PagerIcon />} text="Time Freq. Type & Colourscale" />
              <Select id="tf-type" options={['Raw Power', 'Normalised']} />
            </div>
            <div className="mt-[21px]">
              <Select id="colourscale" label="Colourscale" options={['Magma', 'Viridis']} />
            </div>
            <div className="mt-4 flex flex-col gap-[5px]">
              <LabelRow
                icon={
                  <svg viewBox="0 0 19 19" className="-mr-0.5 h-[19px] w-[19px]" stroke="#b0b0b0" strokeWidth="2" aria-hidden="true">
                    <path d="M9.500 0v19M0 9.500h19" />
                  </svg>
                }
                text="Chart Features"
              />
              <FeaturePicker />
            </div>
            <div className="mt-4 flex flex-col gap-[5px]">
              <LabelRow
                htmlFor="bar-width"
                icon={
                  <svg viewBox="0 0 18 10" className="-mr-0.5 h-[10px] w-[18px]" fill="none" stroke="#e2e2e2" strokeWidth="1.300" aria-hidden="true">
                    <path d="M1 5h16M5 1L1 5l4 4M13 1l4 4-4 4" />
                  </svg>
                }
                text="Options Bar Width"
                inset="pl-0"
              />
              <Select id="bar-width" options={['Slim', 'Wide']} />
            </div>
            <div className="pt-[42px]">
              <ApplyButton />
            </div>
          </Card>
        </aside>

        <main className="min-w-0 flex-1">
          <Chart />
        </main>
      </div>
    </div>
  )
}
